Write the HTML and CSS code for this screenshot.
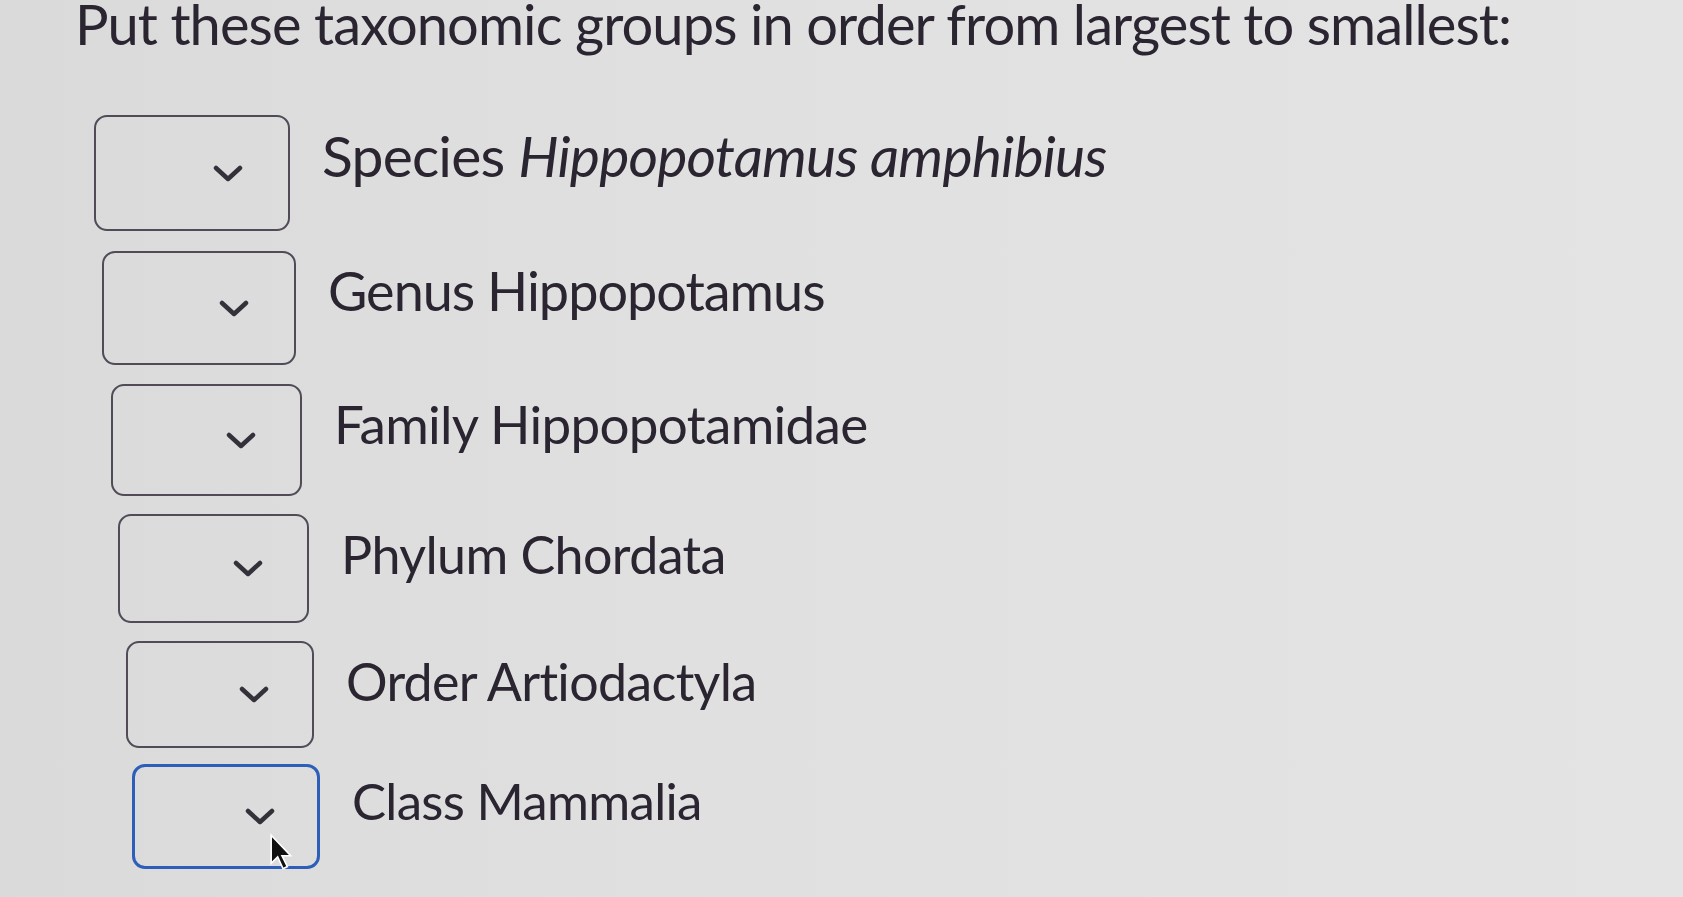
FILE: index.html
```html
<!DOCTYPE html>
<html>
<head>
<meta charset="utf-8">
<link rel="stylesheet" href="styles.css">
</head>
<body>
<main class="page">
  <h1 class="title">Put these taxonomic groups in order from largest to smallest:</h1>
  <ul class="rows">
    <li class="row r1">
      <div class="select"><svg class="chev" viewBox="0 0 30 17"><path d="M3 3 L15 14 L27 3"/></svg></div>
      <span class="label">Species <em>Hippopotamus amphibius</em></span>
    </li>
    <li class="row r2">
      <div class="select"><svg class="chev" viewBox="0 0 30 17"><path d="M3 3 L15 14 L27 3"/></svg></div>
      <span class="label">Genus Hippopotamus</span>
    </li>
    <li class="row r3">
      <div class="select"><svg class="chev" viewBox="0 0 30 17"><path d="M3 3 L15 14 L27 3"/></svg></div>
      <span class="label">Family Hippopotamidae</span>
    </li>
    <li class="row r4">
      <div class="select"><svg class="chev" viewBox="0 0 30 17"><path d="M3 3 L15 14 L27 3"/></svg></div>
      <span class="label">Phylum Chordata</span>
    </li>
    <li class="row r5">
      <div class="select"><svg class="chev" viewBox="0 0 30 17"><path d="M3 3 L15 14 L27 3"/></svg></div>
      <span class="label">Order Artiodactyla</span>
    </li>
    <li class="row r6">
      <div class="select focused"><svg class="chev" viewBox="0 0 30 17"><path d="M3 3 L15 14 L27 3"/></svg>
        <svg class="cursor" viewBox="0 0 24 36"><path d="M2 2 L2 28 L8 22 L13 33 L17 31 L12 21 L20 21 Z"/></svg>
      </div>
      <span class="label">Class Mammalia</span>
    </li>
  </ul>
</main>
</body>
</html>
```
FILE: styles.css
```css
html, body {
  margin: 0;
  padding: 0;
}
body {
  width: 1683px;
  height: 897px;
  overflow: hidden;
  background: linear-gradient(90deg, #dadada 0%, #e0e0e0 40%, #e4e4e4 100%);
  font-family: Lato, "Open Sans", sans-serif;
  color: #2a2530;
}
.page {
  padding: 0 0 0 75px;
}
.title {
  margin: 0;
  font-weight: 400;
  font-size: 56px;
  letter-spacing: -0.9px;
  line-height: 48px;
  height: 46px;
  white-space: nowrap;
}
.rows {
  list-style: none;
  margin: 0;
  padding: 0;
  display: flex;
  flex-direction: column;
}
.row {
  display: flex;
  align-items: flex-start;
  gap: 32px;
}
.select {
  position: relative;
  box-sizing: border-box;
  border: 2px solid #514b58;
  border-radius: 13px;
  display: flex;
  align-items: center;
  justify-content: flex-end;
  flex: none;
}
.select.focused {
  border: 3px solid #2e5fb8;
}
.chev {
  width: 30px;
  height: 17px;
  fill: none;
  stroke: #35313a;
  stroke-width: 4.5;
  stroke-linecap: round;
  stroke-linejoin: round;
}
.cursor {
  position: absolute;
  left: 134px;
  top: 66px;
  width: 26px;
  height: 39px;
  fill: #111;
  stroke: #fff;
  stroke-width: 1.5;
}
.label {
  font-size: 58px;
  line-height: 58px;
  margin-top: 11px;
  white-space: nowrap;
}
.label em {
  font-style: italic;
}
.r1 { margin: 69px 0 0 19px; }
.r1 .select { width: 196px; height: 116px; padding-right: 45px; }
.r1 .label { font-size: 57px; letter-spacing: -0.8px; }
.r2 { margin: 20px 0 0 27px; }
.r2 .select { width: 194px; height: 114px; padding-right: 45px; }
.r2 .label { font-size: 54px; letter-spacing: -1px; }
.r3 { margin: 19px 0 0 36px; }
.r3 .select { width: 191px; height: 112px; padding-right: 44px; }
.r3 .label { font-size: 53px; letter-spacing: -0.7px; }
.r4 { margin: 18px 0 0 43px; }
.r4 .select { width: 191px; height: 109px; padding-right: 44px; }
.r4 .label { font-size: 52px; letter-spacing: -0.6px; }
.r5 { margin: 18px 0 0 51px; }
.r5 .select { width: 188px; height: 107px; padding-right: 43px; }
.r5 .label { font-size: 52px; letter-spacing: -0.7px; }
.r6 { margin: 16px 0 0 57px; }
.r6 .select { width: 188px; height: 105px; padding-right: 42px; }
.r6 .label { font-size: 51px; letter-spacing: -0.7px; margin-top: 8px; }
```
